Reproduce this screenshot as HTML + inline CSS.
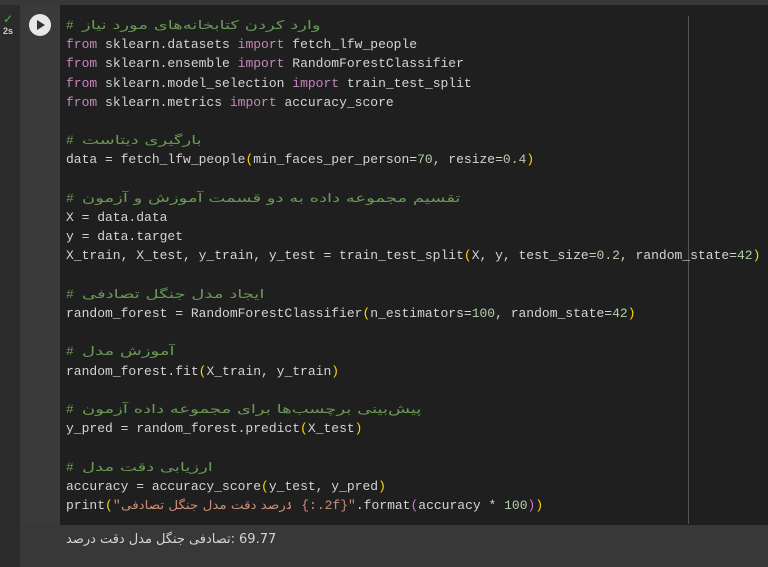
<!DOCTYPE html>
<html><head><meta charset="utf-8"><style>
body{margin:0;width:768px;height:567px;background:#2b2b2b;position:relative;overflow:hidden;font-family:"Liberation Mono",monospace}
.top{position:absolute;left:0;top:0;width:768px;height:5px;background:#383838}
.gut{position:absolute;left:20px;top:5px;width:40px;height:520px;background:#3a3a3a}
.code{position:absolute;left:60px;top:5px;width:708px;height:520px;background:#1f1f1f}
.vl{position:absolute;left:688px;top:16px;width:1px;height:508px;background:#555}
.out{position:absolute;left:20px;top:525px;width:748px;height:42px;background:#383838}
.outt{position:absolute;left:66px;top:532px;font:13px "DejaVu Sans","Liberation Sans",sans-serif;color:#d4d4d4;white-space:nowrap}
.outt span{display:inline-block;margin-right:4px}
pre{position:absolute;left:66px;top:16px;margin:0;font:13px/19.2px "Liberation Mono","DejaVu Sans",monospace;color:#d4d4d4}
.k{color:#c586c0}.c{color:#6a9955}.n{color:#b5cea8}.s{color:#ce9178}.y{color:#ffd700}.p{color:#da70d6}
.fa{display:inline-block;font-family:"DejaVu Sans",sans-serif;font-size:12px;line-height:19px;transform:scaleX(1.5);transform-origin:left center;vertical-align:top}
.ps{display:inline-block;width:165px;vertical-align:top;height:19px;overflow:visible}
.ps .fa{transform:scaleX(1.12)}
.run{position:absolute;left:29px;top:14px;width:22px;height:22px;border-radius:50%;background:#e8e8e8}
.run:after{content:"";position:absolute;left:8px;top:6px;border-left:8px solid #333;border-top:5px solid transparent;border-bottom:5px solid transparent}
.chk{position:absolute;left:3px;top:12px;color:#3fb950;font:bold 12px "DejaVu Sans",sans-serif}
.t{position:absolute;left:3px;top:26px;color:#ccc;font:bold 9px "Liberation Sans",sans-serif}
</style></head><body>
<div class="top"></div><div class="gut"></div><div class="code"></div><div class="vl"></div>
<div class="out"></div>
<div class="run"></div><div class="chk">✓</div><div class="t">2s</div>
<pre><span class="c"># <span class="fa" dir="rtl">وارد کردن کتابخانه‌های مورد نیاز</span></span>
<span class="k">from</span> sklearn.datasets <span class="k">import</span> fetch_lfw_people
<span class="k">from</span> sklearn.ensemble <span class="k">import</span> RandomForestClassifier
<span class="k">from</span> sklearn.model_selection <span class="k">import</span> train_test_split
<span class="k">from</span> sklearn.metrics <span class="k">import</span> accuracy_score

<span class="c"># <span class="fa" dir="rtl">بارگیری دیتاست</span></span>
data = fetch_lfw_people<span class="y">(</span>min_faces_per_person=<span class="n">70</span>, resize=<span class="n">0.4</span><span class="y">)</span>

<span class="c"># <span class="fa" dir="rtl">تقسیم مجموعه داده به دو قسمت آموزش و آزمون</span></span>
X = data.data
y = data.target
X_train, X_test, y_train, y_test = train_test_split<span class="y">(</span>X, y, test_size=<span class="n">0.2</span>, random_state=<span class="n">42</span><span class="y">)</span>

<span class="c"># <span class="fa" dir="rtl">ایجاد مدل جنگل تصادفی</span></span>
random_forest = RandomForestClassifier<span class="y">(</span>n_estimators=<span class="n">100</span>, random_state=<span class="n">42</span><span class="y">)</span>

<span class="c"># <span class="fa" dir="rtl">آموزش مدل</span></span>
random_forest.fit<span class="y">(</span>X_train, y_train<span class="y">)</span>

<span class="c"># <span class="fa" dir="rtl">پیش‌بینی برچسب‌ها برای مجموعه داده آزمون</span></span>
y_pred = random_forest.predict<span class="y">(</span>X_test<span class="y">)</span>

<span class="c"># <span class="fa" dir="rtl">ارزیابی دقت مدل</span></span>
accuracy = accuracy_score<span class="y">(</span>y_test, y_pred<span class="y">)</span>
print<span class="y">(</span><span class="s">"<span class="ps"><span class="fa" dir="rtl">درصد دقت مدل جنگل تصادفی</span></span>: {:.2f}"</span>.format<span class="p">(</span>accuracy * <span class="n">100</span><span class="p">)</span><span class="y">)</span></pre>
<div class="outt"><span>درصد</span><span>دقت</span><span>مدل</span><span>جنگل</span><span>تصادفی:</span><span>69.77</span></div>
</body></html>
